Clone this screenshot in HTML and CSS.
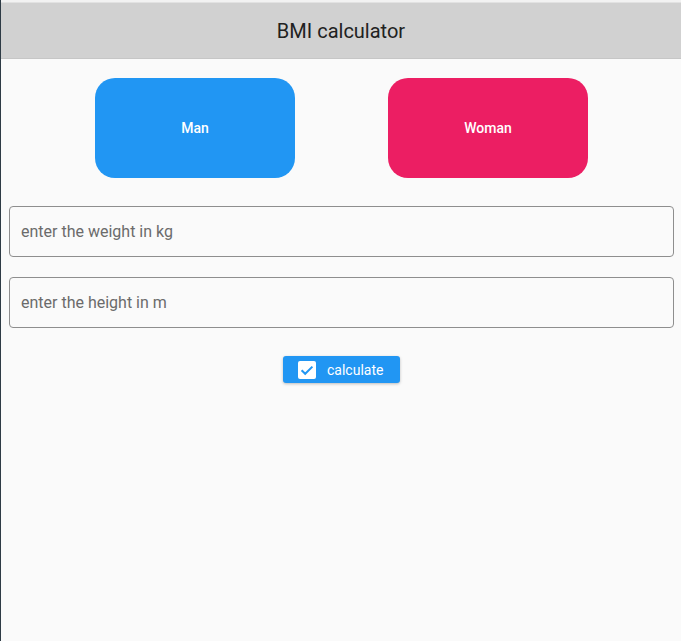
FILE: index.html
```html
<!DOCTYPE html>
<html>
<head>
<meta charset="utf-8">
<link rel="stylesheet" href="styles.css">
</head>
<body>
<div class="frame">
  <div class="topline"></div>
  <header class="appbar">BMI calculator</header>
  <main class="content">
    <div class="genders">
      <div class="gender man">Man</div>
      <div class="gender woman">Woman</div>
    </div>
    <div class="field"><input class="input" type="text" placeholder="enter the weight in kg"></div>
    <div class="field"><input class="input" type="text" placeholder="enter the height in m"></div>
    <div class="actions">
      <button class="calc">
        <span class="check">
          <svg width="18" height="18" viewBox="0 0 18 18"><rect x="0" y="0" width="18" height="18" rx="2" fill="#fff"/><path d="M3.6 9.2 L7.2 12.8 L14.4 5.6" fill="none" stroke="#2196f3" stroke-width="2"/></svg>
        </span>
        <span class="label">calculate</span>
      </button>
    </div>
  </main>
</div>
</body>
</html>
```
FILE: styles.css
```css
html, body {
  margin: 0;
  padding: 0;
  background: #fafafa;
}
body {
  font-family: Roboto, "Liberation Sans", sans-serif;
}
.frame {
  width: 681px;
  height: 641px;
  box-sizing: border-box;
  border-left: 1px solid #2e3b45;
  background: #fafafa;
  display: flex;
  flex-direction: column;
}
.topline {
  height: 2px;
  background: #f2f2f2;
  border-bottom: 1px solid #e2e2e2;
}
.appbar {
  height: 55px;
  background: #d1d1d1;
  border-bottom: 1px solid #c6c6c6;
  display: flex;
  align-items: center;
  justify-content: center;
  font-size: 20px;
  color: #212121;
}
.content {
  display: flex;
  flex-direction: column;
}
.genders {
  display: flex;
  justify-content: space-evenly;
  padding-top: 19px;
  padding-left: 1px;
}
.gender {
  width: 200px;
  height: 100px;
  border-radius: 20px;
  display: flex;
  align-items: center;
  justify-content: center;
  color: #fff;
  font-size: 14px;
  font-weight: 500;
}
.man { background: #2196f3; }
.woman { background: #ec1e63; }
.field {
  padding: 0 7px 0 8px;
  margin-top: 28px;
}
.field + .field { margin-top: 20px; }
.input {
  display: block;
  width: 100%;
  box-sizing: border-box;
  height: 51px;
  border: 1px solid #8e8e8e;
  border-radius: 4px;
  background: transparent;
  padding: 0 11px 1px;
  font-family: Roboto, "Liberation Sans", sans-serif;
  font-size: 16px;
  color: #222;
  outline: none;
}
.input::placeholder { color: #6b6b6b; }
.actions {
  display: flex;
  justify-content: center;
  padding-top: 28px;
  padding-left: 1px;
}
.calc {
  display: flex;
  align-items: center;
  height: 27px;
  width: 117px;
  padding: 0 0 0 15px;
  border: none;
  border-radius: 3px;
  background: #2196f3;
  box-shadow: 0 1px 3px rgba(0,0,0,0.25);
  color: #fff;
  font-family: Roboto, "Liberation Sans", sans-serif;
  font-size: 14px;
}
.check { display: flex; width: 18px; height: 18px; }
.label { margin-left: 11px; }
```
